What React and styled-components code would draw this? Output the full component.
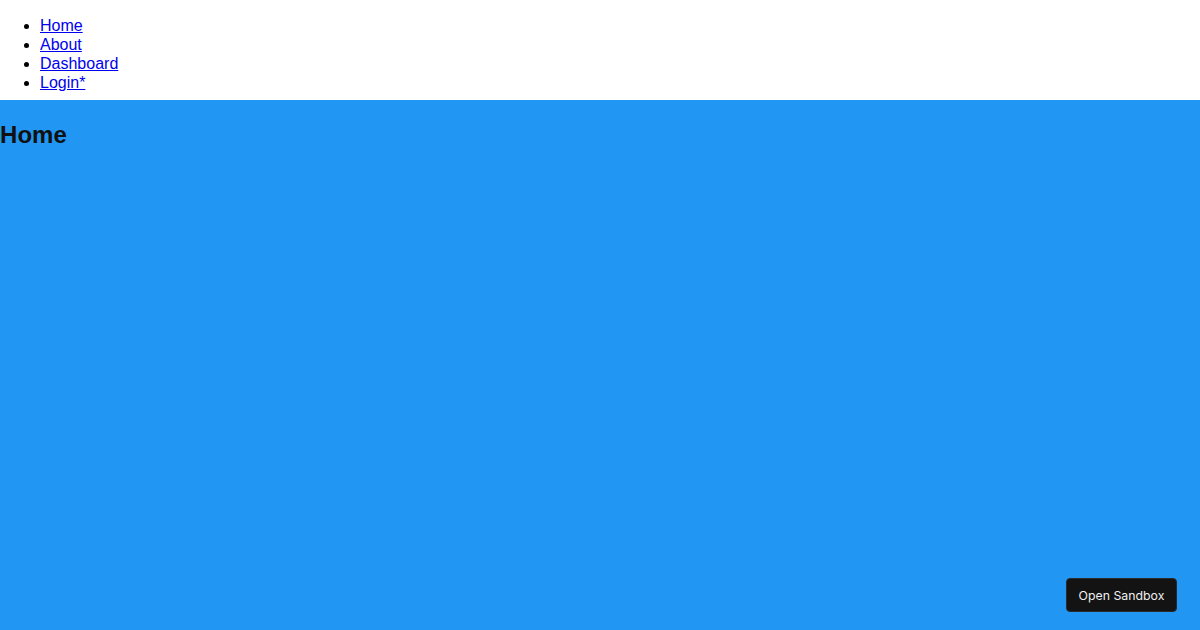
import React from 'react';
import styled, { createGlobalStyle } from 'styled-components';

const GlobalStyle = createGlobalStyle`
  html, body {
    margin: 0;
    padding: 0;
    font-family: "Liberation Sans", Arial, sans-serif;
  }
`;

const Page = styled.div`
  display: flex;
  flex-direction: column;
  height: 100vh;
`;

const Header = styled.nav`
  height: 100px;
  background: #fff;
`;

const NavList = styled.ul`
  margin: 16px 0 0;
  padding-left: 40px;
  line-height: 19px;
  font-size: 16px;
`;

const NavItem = styled.li`
  color: #000;
`;

const NavLink = styled.a`
  color: #0000ee;
  text-decoration: underline;
`;

const Content = styled.main`
  flex: 1;
  display: flow-root;
  background: #2196f3;
`;

const Title = styled.h2`
  margin: 21px 0 20px;
  font-size: 24px;
  letter-spacing: 0.05px;
  font-weight: bold;
  color: #111;
`;

const SandboxButton = styled.button`
  position: fixed;
  right: 23px;
  bottom: 18px;
  width: 111px;
  height: 34px;
  padding: 1px 0 0;
  background: #131313;
  color: #f0f0f0;
  border: 1px solid #2a2a2a;
  border-radius: 4px;
  font-family: Inter, "Liberation Sans", sans-serif;
  font-size: 12.3px;
  cursor: pointer;
`;

const links = ['Home', 'About', 'Dashboard', 'Login*'];

export default function App() {
  return (
    <Page>
      <GlobalStyle />
      <Header>
        <NavList>
          {links.map(l => (
            <NavItem key={l}>
              <NavLink href="#">{l}</NavLink>
            </NavItem>
          ))}
        </NavList>
      </Header>
      <Content>
        <Title>Home</Title>
      </Content>
      <SandboxButton>Open Sandbox</SandboxButton>
    </Page>
  );
}
